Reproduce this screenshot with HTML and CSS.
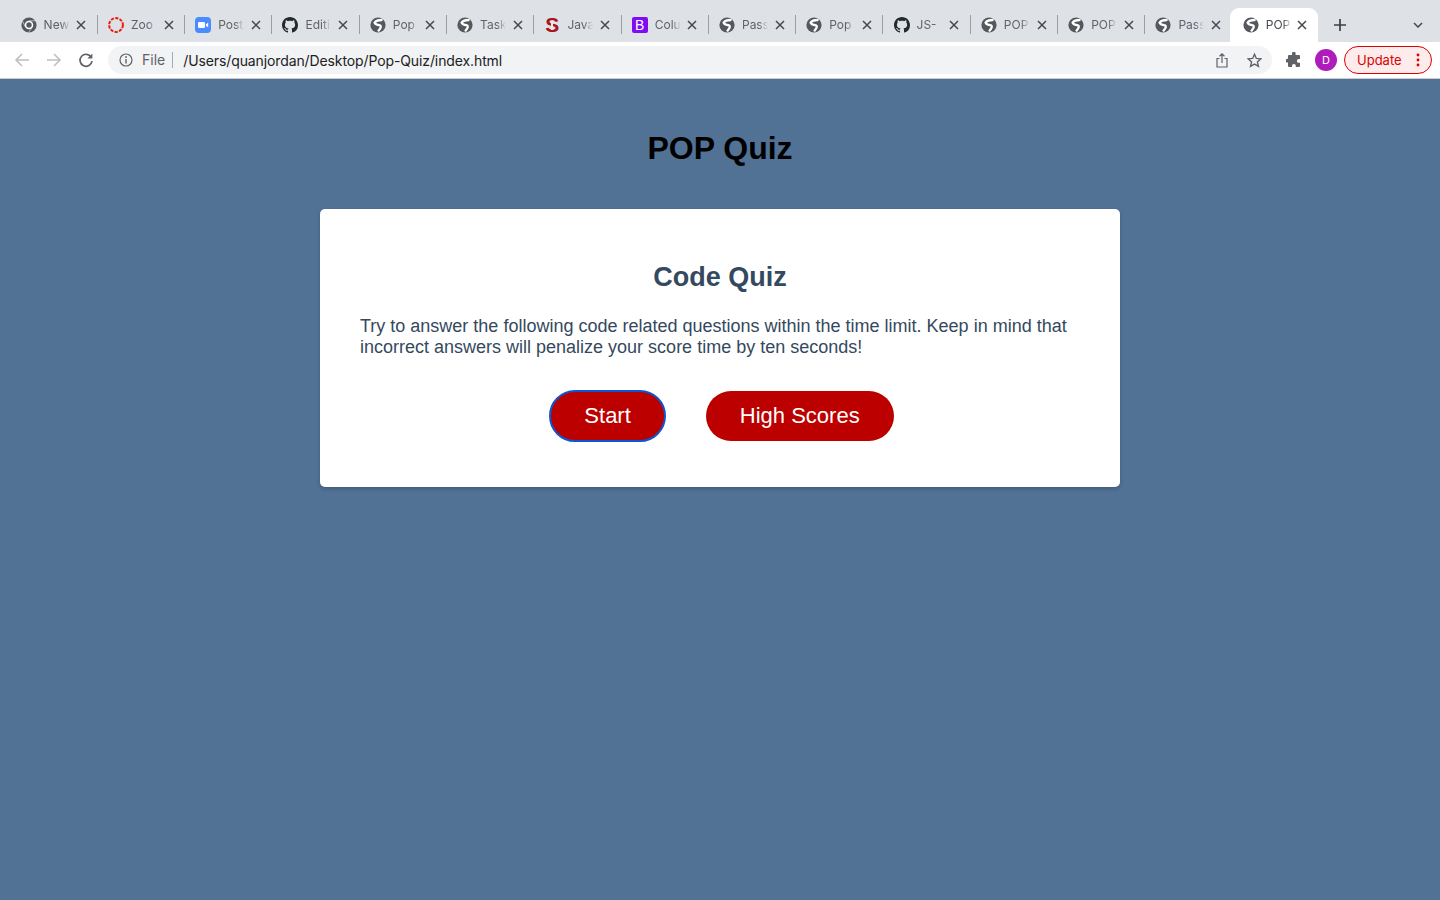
FILE: index.html
```html
<!DOCTYPE html>
<html lang="en">
<head>
    <meta charset="UTF-8" />
    <meta name="viewport" content="width=device-width, initial-scale=1.0"/>
    <title>POP Quiz</title>
    <link rel="stylesheet" href="styles.css">
</head>
<body>

    <!-- Icon sprite -->
    <svg class="sprite" width="0" height="0">
        <symbol id="globe" viewBox="0 0 16 16">
            <circle cx="8" cy="8" r="7.6" fill="#55585d"/>
            <path d="M11.6 3 C8.6 3 6 3.6 4.6 5.6 C5.2 7.6 7.6 8 10 8.4 C11.4 9 11 11 8.6 13.6" stroke="#fff" stroke-width="2.3" fill="none" stroke-linecap="round"/>
        </symbol>
        <symbol id="chrome" viewBox="0 0 16 16">
            <circle cx="8" cy="8" r="7.6" fill="#55585d"/>
            <circle cx="8" cy="8" r="4.3" fill="#fff"/>
            <circle cx="8" cy="8" r="2.7" fill="#55585d"/>
            <path d="M8 3.8 L14.8 3.8 M4.2 9.6 L1.6 4.2 M10.8 11.2 L7.4 15.6" stroke="#dee1e6" stroke-width="0.7" fill="none"/>
        </symbol>
        <symbol id="github" viewBox="0 0 16 16">
            <path fill="#24292e" d="M8 0C3.58 0 0 3.58 0 8c0 3.54 2.29 6.53 5.47 7.59.4.07.55-.17.55-.38 0-.19-.01-.82-.01-1.49-2.01.37-2.53-.49-2.69-.94-.09-.23-.48-.94-.82-1.13-.28-.15-.68-.52-.01-.53.63-.01 1.08.58 1.23.82.72 1.21 1.87.87 2.33.66.07-.52.28-.87.51-1.07-1.78-.2-3.64-.89-3.64-3.95 0-.87.31-1.59.82-2.15-.08-.2-.36-1.02.08-2.12 0 0 .67-.21 2.2.82.64-.18 1.32-.27 2-.27s1.36.09 2 .27c1.53-1.04 2.2-.82 2.2-.82.44 1.1.16 1.92.08 2.12.51.56.82 1.27.82 2.15 0 3.07-1.87 3.75-3.65 3.95.29.25.54.73.54 1.48 0 1.07-.01 1.93-.01 2.2 0 .21.15.46.55.38A8.01 8.01 0 0 0 16 8c0-4.42-3.58-8-8-8z"/>
        </symbol>
        <symbol id="zoomring" viewBox="0 0 16 16">
            <circle cx="8" cy="8" r="6.9" fill="none" stroke="#ee1c0e" stroke-width="2" stroke-dasharray="3.2 1.3"/>
        </symbol>
        <symbol id="zoomcam" viewBox="0 0 16 16">
            <rect width="16" height="16" rx="4" fill="#4a8cff"/>
            <rect x="3" y="5" width="7" height="6" rx="1.3" fill="#fff"/>
            <path d="M10.8 7.4 L13.2 5.4 V10.6 L10.8 8.6 Z" fill="#fff"/>
        </symbol>
        <symbol id="close" viewBox="0 0 10 10">
            <path d="M1 1 L9 9 M9 1 L1 9" stroke="#45484d" stroke-width="1.5" fill="none"/>
        </symbol>
    </svg>

    <!-- Browser chrome -->
    <header class="browser">
        <div class="tab-strip">
            <div class="tab"><svg class="favicon"><use href="#chrome"/></svg><span class="tab-title">New</span><svg class="tab-close"><use href="#close"/></svg></div>
            <div class="tab"><svg class="favicon"><use href="#zoomring"/></svg><span class="tab-title">Zoo</span><svg class="tab-close"><use href="#close"/></svg></div>
            <div class="tab"><svg class="favicon"><use href="#zoomcam"/></svg><span class="tab-title">Post</span><svg class="tab-close"><use href="#close"/></svg></div>
            <div class="tab"><svg class="favicon"><use href="#github"/></svg><span class="tab-title">Editi</span><svg class="tab-close"><use href="#close"/></svg></div>
            <div class="tab"><svg class="favicon"><use href="#globe"/></svg><span class="tab-title">Pop</span><svg class="tab-close"><use href="#close"/></svg></div>
            <div class="tab"><svg class="favicon"><use href="#globe"/></svg><span class="tab-title">Task</span><svg class="tab-close"><use href="#close"/></svg></div>
            <div class="tab"><span class="favicon letter-icon stanford">S</span><span class="tab-title">Java</span><svg class="tab-close"><use href="#close"/></svg></div>
            <div class="tab"><span class="favicon letter-icon bootstrap">B</span><span class="tab-title">Colu</span><svg class="tab-close"><use href="#close"/></svg></div>
            <div class="tab"><svg class="favicon"><use href="#globe"/></svg><span class="tab-title">Pass</span><svg class="tab-close"><use href="#close"/></svg></div>
            <div class="tab"><svg class="favicon"><use href="#globe"/></svg><span class="tab-title">Pop</span><svg class="tab-close"><use href="#close"/></svg></div>
            <div class="tab"><svg class="favicon"><use href="#github"/></svg><span class="tab-title">JS-</span><svg class="tab-close"><use href="#close"/></svg></div>
            <div class="tab"><svg class="favicon"><use href="#globe"/></svg><span class="tab-title">POP</span><svg class="tab-close"><use href="#close"/></svg></div>
            <div class="tab"><svg class="favicon"><use href="#globe"/></svg><span class="tab-title">POP</span><svg class="tab-close"><use href="#close"/></svg></div>
            <div class="tab tab-last"><svg class="favicon"><use href="#globe"/></svg><span class="tab-title">Pass</span><svg class="tab-close"><use href="#close"/></svg></div>
            <div class="tab tab-active"><svg class="favicon"><use href="#globe"/></svg><span class="tab-title">POP</span><svg class="tab-close"><use href="#close"/></svg></div>
            <svg class="new-tab" viewBox="0 0 12 12"><path d="M6 0 V12 M0 6 H12" stroke="#3c4043" stroke-width="1.7" fill="none"/></svg>
            <svg class="tab-menu" viewBox="0 0 10 6"><path d="M1 1 L5 5 L9 1" stroke="#45484d" stroke-width="1.5" fill="none"/></svg>
        </div>

        <div class="toolbar">
            <svg class="nav-icon" viewBox="0 0 16 16"><path d="M15 8 H2 M8 2 L2 8 L8 14" stroke="#bcbfc4" stroke-width="1.6" fill="none"/></svg>
            <svg class="nav-icon" viewBox="0 0 16 16"><path d="M1 8 H14 M8 2 L14 8 L8 14" stroke="#bcbfc4" stroke-width="1.6" fill="none"/></svg>
            <svg class="nav-icon" viewBox="0 0 16 16"><path d="M13.2 5.2 A6 6 0 1 0 14 9" stroke="#5f6368" stroke-width="1.7" fill="none"/><path d="M14.4 1.6 V6.6 H9.4 Z" fill="#5f6368"/></svg>

            <div class="omnibox">
                <svg class="info-icon" viewBox="0 0 14 14"><circle cx="7" cy="7" r="6" stroke="#5f6368" stroke-width="1.2" fill="none"/><path d="M7 6 V10.4" stroke="#5f6368" stroke-width="1.4"/><circle cx="7" cy="4" r="0.9" fill="#5f6368"/></svg>
                <span class="scheme">File</span>
                <span class="url">/Users/quanjordan/Desktop/Pop-Quiz/index.html</span>
                <svg class="omni-icon share-icon" viewBox="0 0 12 15"><path d="M3.5 5.5 H1 V14 H11 V5.5 H8.5 M6 10 V1 M3.5 3.2 L6 0.8 L8.5 3.2" stroke="#5f6368" stroke-width="1.2" fill="none"/></svg>
                <svg class="omni-icon star-icon" viewBox="0 0 14 14"><path d="M7 1.2 L8.7 5.1 L12.9 5.5 L9.7 8.3 L10.7 12.5 L7 10.3 L3.3 12.5 L4.3 8.3 L1.1 5.5 L5.3 5.1 Z" stroke="#5f6368" stroke-width="1.3" fill="none"/></svg>
            </div>

            <svg class="puzzle" viewBox="0 0 16 16"><path fill="#5f6368" d="M6 1.5 A1.8 1.8 0 0 1 9.6 1.5 V3 H13 A1 1 0 0 1 14 4 V7 H12.8 A1.9 1.9 0 0 0 12.8 10.8 H14 V14 A1 1 0 0 1 13 15 H9.8 V13.8 A1.9 1.9 0 0 0 6 13.8 V15 H3 A1 1 0 0 1 2 14 V10.5 H1.5 A1.9 1.9 0 0 1 1.5 6.7 H2 V4 A1 1 0 0 1 3 3 H6 Z"/></svg>
            <span class="avatar">D</span>
            <div class="update-btn">
                <span>Update</span>
                <svg class="update-dots" viewBox="0 0 4 14"><circle cx="2" cy="2" r="1.4"/><circle cx="2" cy="7" r="1.4"/><circle cx="2" cy="12" r="1.4"/></svg>
            </div>
        </div>
    </header>

    <!-- Quiz page -->
    <main class="page">
        <h1>POP Quiz</h1>
        <section class="card">
            <h2>Code Quiz</h2>
            <p>Try to answer the following code related questions within the time limit. Keep in mind that incorrect answers will penalize your score time by ten seconds!</p>
            <div class="actions">
                <button class="quiz-btn quiz-btn-focus">Start</button>
                <button class="quiz-btn">High Scores</button>
            </div>
        </section>
    </main>

</body>
</html>
```

FILE: styles.css
```css
* {
    margin: 0;
    padding: 0;
    box-sizing: border-box;
}

body {
    font-family: 'Liberation Sans', Arial, sans-serif;
    height: 900px;
    overflow: hidden;
    display: flex;
    flex-direction: column;
    background: #517295;
}

.sprite {
    position: absolute;
}

/* Tab strip */
.tab-strip {
    height: 42px;
    background: #dee1e6;
    display: flex;
    align-items: flex-end;
    padding-left: 10px;
    font-family: Inter, 'Noto Sans', sans-serif;
}

.tab {
    width: 87.3px;
    height: 34px;
    display: flex;
    align-items: center;
    padding: 0 11px 0 10.6px;
    position: relative;
    flex-shrink: 0;
}

.tab::after {
    content: "";
    position: absolute;
    right: -0.5px;
    top: 7px;
    height: 19px;
    width: 1px;
    background: #9b9ea3;
}

.tab-last::after,
.tab-active::after {
    display: none;
}

.tab-active {
    background: #fff;
    border-radius: 9px 9px 0 0;
    width: 88px;
    margin-left: -2px;
    padding-left: 12.6px;
}

.favicon {
    width: 16px;
    height: 16px;
    flex-shrink: 0;
}

.letter-icon {
    display: flex;
    align-items: center;
    justify-content: center;
}

.stanford {
    position: relative;
    color: #a8141c;
    font-family: 'Liberation Sans', sans-serif;
    font-size: 21px;
    font-weight: bold;
}

/* the little tree in the middle of the S */
.stanford::after {
    content: "";
    position: absolute;
    left: 7px;
    top: 4px;
    width: 2px;
    height: 9px;
    background: #f4e6e6;
}

.bootstrap {
    background: #7f0df2;
    color: #fff;
    border-radius: 2px;
    font-size: 14px;
    font-family: 'Liberation Sans', sans-serif;
}

.tab-title {
    width: 26px;
    margin-left: 7px;
    font-size: 12px;
    line-height: 14px;
    margin-bottom: 1px;
    color: #5f6368;
    white-space: nowrap;
    overflow: hidden;
    -webkit-mask-image: linear-gradient(to right, #000 65%, transparent);
    mask-image: linear-gradient(to right, #000 65%, transparent);
}

.tab-active .tab-title {
    color: #45484d;
}

.tab-close {
    width: 10px;
    height: 10px;
    margin-left: auto;
    flex-shrink: 0;
}

.new-tab {
    width: 12px;
    height: 12px;
    margin: 0 0 11px 16px;
}

.tab-menu {
    width: 10px;
    height: 6px;
    margin: 0 0 14px 67px;
}

/* Toolbar */
.toolbar {
    height: 37px;
    background: #fff;
    border-bottom: 1px solid #c9cbcf;
    display: flex;
    align-items: center;
    padding: 0 8px 0 14px;
}

.nav-icon {
    width: 16px;
    height: 16px;
    margin-right: 16px;
}

.omnibox {
    width: 1164px;
    height: 28px;
    margin-left: -2px;
    background: #f1f3f4;
    border-radius: 14px;
    display: flex;
    align-items: center;
    padding-left: 11px;
    font-family: Inter, 'Noto Sans', sans-serif;
    font-size: 14px;
}

.info-icon {
    width: 14px;
    height: 14px;
}

.scheme {
    color: #5f6368;
    margin-left: 9px;
    padding-right: 7px;
    border-right: 1px solid #a9abaf;
    line-height: 16px;
}

.url {
    margin-left: 10px;
    color: #202124;
    letter-spacing: -0.11px;
}

.omni-icon {
    flex-shrink: 0;
}

.share-icon {
    width: 12px;
    height: 15px;
    margin-left: auto;
}

.star-icon {
    width: 15px;
    height: 15px;
    margin: 0 10px 0 19px;
}

.puzzle {
    width: 16px;
    height: 16px;
    margin-left: 14px;
}

.avatar {
    width: 22px;
    height: 22px;
    margin-left: 13px;
    border-radius: 50%;
    background: #b01cbb;
    color: #fff;
    font: 11px Inter, sans-serif;
    display: flex;
    align-items: center;
    justify-content: center;
}

.update-btn {
    width: 88px;
    height: 28px;
    margin-left: 7px;
    border: 1px solid #dc0000;
    border-radius: 14px;
    background: #fdeceb;
    color: #dc0000;
    font: 13px Inter, sans-serif;
    display: flex;
    align-items: center;
    padding-left: 12px;
}

.update-dots {
    width: 4px;
    height: 14px;
    margin-left: auto;
    margin-right: 11px;
    fill: #dc0000;
}

/* Page */
.page {
    flex: 1;
    display: flex;
    flex-direction: column;
    align-items: center;
}

h1 {
    margin-top: 51px;
    font-size: 32px;
    line-height: 37px;
    color: #000;
}

.card {
    width: 800px;
    height: 278px;
    margin-top: 42px;
    padding: 53px 40px 0;
    background: #fff;
    border-radius: 5px;
    box-shadow: 0 2px 4px rgba(0, 0, 0, 0.2);
    text-align: center;
}

h2 {
    font-size: 27px;
    line-height: 31px;
    color: #34495e;
}

.card p {
    margin-top: 23px;
    font-size: 18px;
    line-height: 21px;
    color: #34495e;
    text-align: left;
}

.actions {
    margin-top: 33px;
    display: flex;
    justify-content: center;
    gap: 41px;
    padding-left: 4px;
}

.quiz-btn {
    height: 50px;
    padding: 0 34px;
    border: none;
    border-radius: 25px;
    background: #bc0000;
    color: #fff;
    font-family: 'Liberation Sans', Arial, sans-serif;
    font-size: 22px;
}

.quiz-btn-focus {
    outline: 2px solid #0b57d0;
    outline-offset: -1px;
}
```
